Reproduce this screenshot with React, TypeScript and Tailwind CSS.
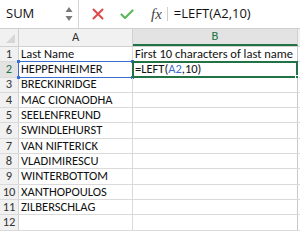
import React from 'react';

const names = [
  'Last Name',
  'HEPPENHEIMER',
  'BRECKINRIDGE',
  'MAC CIONAODHA',
  'SEELENFREUND',
  'SWINDLEHURST',
  'VAN NIFTERICK',
  'VLADIMIRESCU',
  'WINTERBOTTOM',
  'XANTHOPOULOS',
  'ZILBERSCHLAG',
  '',
];

const App = () => {
  return (
    <div className="w-[300px] bg-white text-[#111] font-['Carlito','Open_Sans',sans-serif]">
      {/* formula bar */}
      <div className="flex items-center h-[29px] border-b border-[#cfcfcf] font-['Open_Sans',sans-serif]">
        <div className="flex items-center justify-between w-[79px] h-full pl-[6px] pr-[5px] border-r border-[#d4d4d4]">
          <span className="text-[13px]">SUM</span>
          <svg width="8" height="16" viewBox="0 0 8 16">
            <path d="M4 1 L7.5 6 L0.5 6 Z" fill="#7a7a7a" />
            <path d="M4 15 L7.5 10 L0.5 10 Z" fill="#7a7a7a" />
          </svg>
        </div>
        <svg className="ml-[13px]" width="12" height="12" viewBox="0 0 12 12">
          <path d="M1.5 1.5 L10.5 10.5 M10.5 1.5 L1.5 10.5" stroke="#e0484b" strokeWidth="2" strokeLinecap="round" />
        </svg>
        <svg className="ml-[16px]" width="14" height="11" viewBox="0 0 14 11">
          <path d="M1.5 5.5 L5 9 L12.5 1.5" stroke="#5cb85c" strokeWidth="2.2" fill="none" strokeLinecap="round" strokeLinejoin="round" />
        </svg>
        <span className="ml-[17px] text-[15px] italic font-['Liberation_Serif',serif] text-[#444] leading-none">fx</span>
        <div className="ml-[5px] w-px h-[14px] bg-[#cfcfcf]" />
        <span className="ml-[6px] text-[13px]">=LEFT(A2,10)</span>
      </div>

      {/* column headers */}
      <div className="flex h-[18px] bg-[#f1f1f1] border-b border-[#d0d0d0] text-[12.5px] text-[#333]">
        <div className="relative w-[19px] border-r border-[#d0d0d0]">
          <svg className="absolute right-[3px] bottom-[3px]" width="9" height="9" viewBox="0 0 9 9">
            <path d="M9 0 L9 9 L0 9 Z" fill="#d6d6d6" />
          </svg>
        </div>
        <div className="w-[114px] flex items-center justify-center border-r border-[#d0d0d0]">A</div>
        <div className="w-[165px] flex items-center justify-center bg-[#e3e3e3] text-[#217346] border-b-2 border-[#217346] border-r border-r-[#d0d0d0]">B</div>
      </div>

      {/* rows */}
      {names.map((n, i) => {
        const row = i + 1;
        const sel = row === 2;
        return (
          <div key={row} className="flex h-[15.3px] border-b border-[#dadada] text-[12.5px] leading-none">
            <div className={`w-[19px] shrink-0 flex items-center justify-center border-r border-[#d0d0d0] ${sel ? 'bg-[#e3e3e3] text-[#217346]' : 'bg-[#f1f1f1] text-[#333]'}`}>
              {row}
            </div>
            <div className="relative w-[114px] shrink-0 flex items-center pl-[2px] border-r border-[#dadada]">
              {sel && (
                <div className="absolute inset-[-1px] border border-[#3c6fd1]">
                  <div className="absolute -left-[2px] -top-[2px] w-[3px] h-[3px] bg-[#3c6fd1]" />
                  <div className="absolute -right-[2px] -top-[2px] w-[3px] h-[3px] bg-[#3c6fd1]" />
                  <div className="absolute -left-[2px] -bottom-[2px] w-[3px] h-[3px] bg-[#3c6fd1]" />
                  <div className="absolute -right-[2px] -bottom-[2px] w-[3px] h-[3px] bg-[#3c6fd1]" />
                </div>
              )}
              <span className="whitespace-nowrap">{n || '\u00a0'}</span>
            </div>
            <div className="relative w-[165px] shrink-0 flex items-center pl-[2px] border-r border-[#c8c8c8]">
              {row === 1 && <span className="whitespace-nowrap">First 10 characters of last name</span>}
              {sel && (
                <>
                  <div className="absolute -inset-[1px] border-2 border-[#217346]">
                    <div className="absolute -right-[3px] -bottom-[3px] w-[4px] h-[4px] bg-[#217346] border border-white" />
                  </div>
                  <span className="whitespace-nowrap relative">
                    =LEFT(<span className="text-[#3c6fd1]">A2</span>,10)
                  </span>
                </>
              )}
            </div>
          </div>
        );
      })}
    </div>
  );
};

export default App;
